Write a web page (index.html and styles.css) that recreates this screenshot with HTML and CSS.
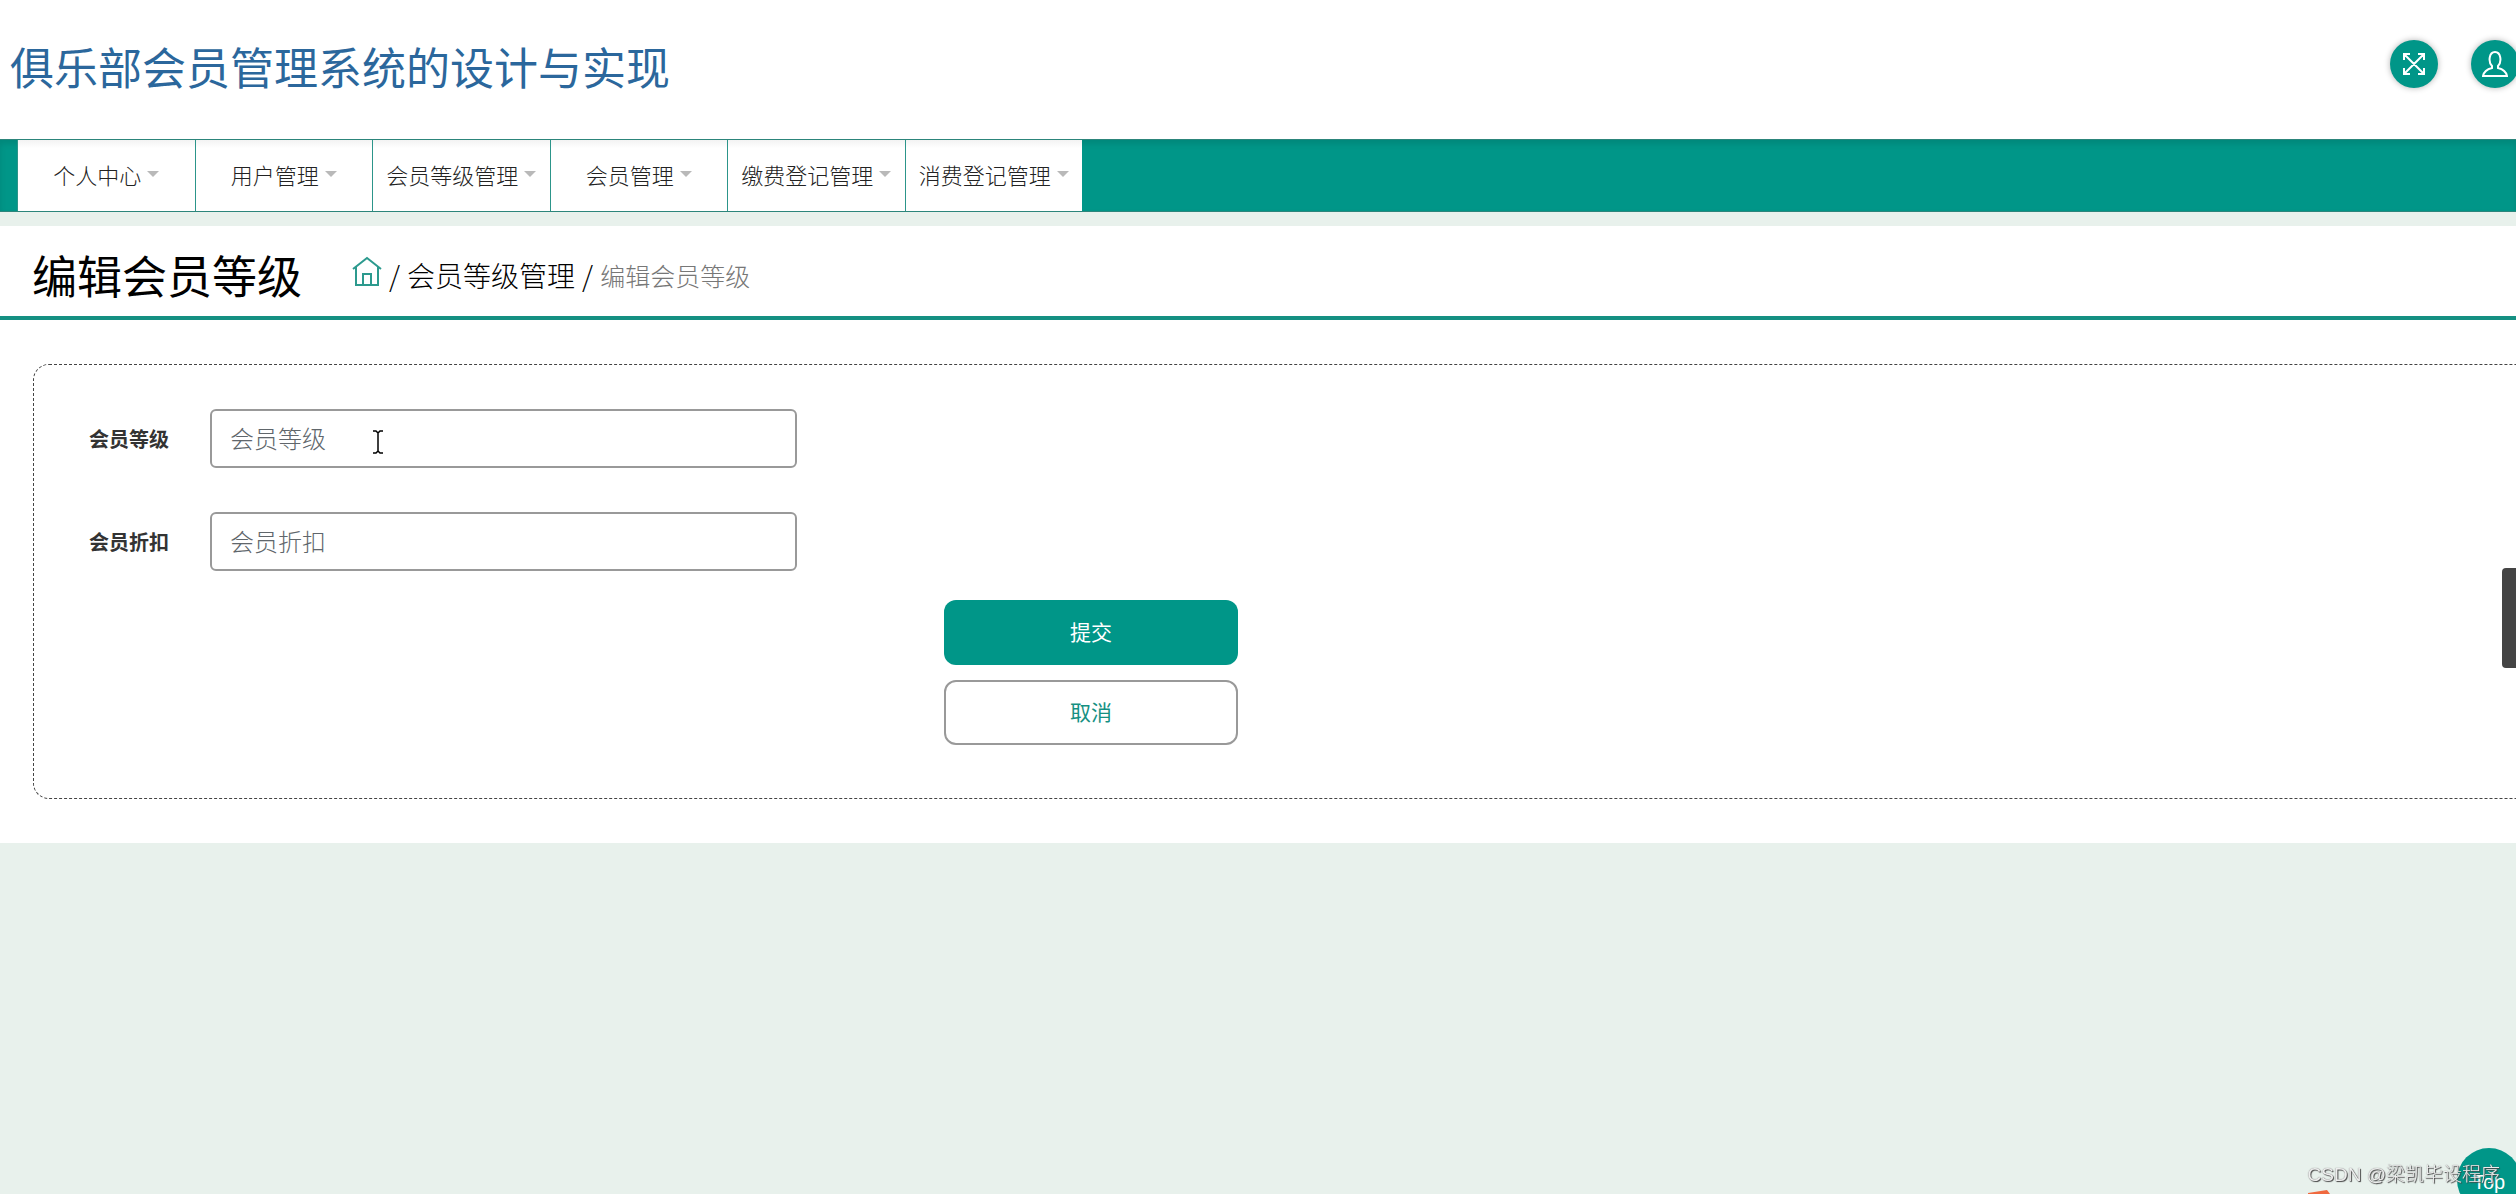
FILE: index.html
```html
<!DOCTYPE html>
<html lang="zh-CN">
<head>
    <meta charset="UTF-8">
    <meta name="viewport" content="width=device-width, initial-scale=1.0">
    <title>编辑会员等级</title>
    <link rel="stylesheet" href="styles.css">
</head>
<body>
    <header class="header">
        <div class="logo">俱乐部会员管理系统的设计与实现</div>
        <div class="header-actions">
            <button type="button" class="circle-btn" aria-label="全屏">
                <svg width="24" height="24" viewBox="0 0 24 24" fill="none" stroke="currentColor" stroke-width="2">
                    <path d="M2 2l20 20M22 2L2 22M2 8V2h6M16 2h6v6M22 16v6h-6M8 22H2v-6"/>
                </svg>
            </button>
            <button type="button" class="circle-btn" aria-label="个人中心">
                <svg width="26" height="26" viewBox="0 0 26 26" fill="none" stroke="currentColor" stroke-width="2">
                    <path d="M10 17v-2C6 11 7 1 13 1s7 10 3 14v2c4 1 8 3 9 8H1c1-5 5-7 9-8z"/>
                </svg>
            </button>
        </div>
    </header>

    <nav class="navbar">
        <div class="nav-list">
            <button type="button" class="nav-item">个人中心<span class="caret"></span></button>
            <button type="button" class="nav-item">用户管理<span class="caret"></span></button>
            <button type="button" class="nav-item">会员等级管理<span class="caret"></span></button>
            <button type="button" class="nav-item">会员管理<span class="caret"></span></button>
            <button type="button" class="nav-item">缴费登记管理<span class="caret"></span></button>
            <button type="button" class="nav-item">消费登记管理<span class="caret"></span></button>
        </div>
    </nav>

    <main class="content">
        <div class="page-head">
            <h1 class="page-title">编辑会员等级</h1>
            <div class="breadcrumb">
                <a href="#" class="home" aria-label="首页">
                    <svg width="30" height="32" viewBox="0 0 30 32" fill="none" stroke="currentColor" stroke-width="2">
                        <path d="M1 13L15 2l14 11M4 11v18h22V11M11 29V18h8v11"/>
                    </svg>
                </a>
                <span>/</span>
                <span>会员等级管理</span>
                <span>/</span>
                <span class="current">编辑会员等级</span>
            </div>
        </div>

        <form class="edit-form">
            <div class="form-row">
                <label for="level">会员等级</label>
                <input type="text" id="level" placeholder="会员等级">
            </div>
            <div class="form-row">
                <label for="discount">会员折扣</label>
                <input type="text" id="discount" placeholder="会员折扣">
            </div>
            <div class="form-btns">
                <button type="button" class="btn btn-submit">提交</button>
                <button type="button" class="btn btn-cancel">取消</button>
            </div>
        </form>
    </main>

    <!-- 悬浮元素 -->
    <svg class="cursor" width="12" height="24" viewBox="0 0 12 24" fill="none" stroke="#000" stroke-width="1.5">
        <path d="M1 1h3l2 2 2-2h3M6 3v18M1 23h3l2-2 2 2h3"/>
    </svg>
    <div class="side-tab"></div>
    <button type="button" class="top-btn">Top</button>
    <svg class="corner-mark" width="22" height="4" viewBox="0 0 22 4">
        <path d="M0 3L19 0l3 4H0z" fill="#f0693f"/>
    </svg>
    <div class="watermark">CSDN @梁凯毕设程序</div>
</body>
</html>
```
FILE: styles.css
```css
* {
    box-sizing: border-box;
}

body {
    margin: 0;
    min-height: 100vh;
    overflow: hidden;
    background-color: #e8f1ec;
    font-family: "Noto Sans CJK SC", sans-serif;
    color: #333;
}

button,
input {
    font-family: inherit;
}

button {
    cursor: pointer;
}

/* 头部 */
.header {
    display: flex;
    justify-content: space-between;
    align-items: center;
    height: 139px;
    padding: 0 0 11px 10px;
    background-color: #fff;
}

.logo {
    padding-top: 4px;
    font-size: 44px;
    line-height: 64px;
    color: #2b679c;
}

.header-actions {
    display: flex;
    gap: 33px;
    margin-right: -3px;
}

.circle-btn {
    display: flex;
    align-items: center;
    justify-content: center;
    width: 48px;
    height: 48px;
    padding: 0;
    border: none;
    border-radius: 50%;
    background-color: #009688;
    color: #fff;
    box-shadow: 0 0 6px rgba(0, 0, 0, 0.3);
}

/* 导航 */
.navbar {
    height: 73px;
    padding-left: 17px;
    background-color: #009688;
    border-top: 1px solid #2c857b;
    border-bottom: 1px solid #2c857b;
    box-shadow: inset 0 4px 6px rgba(0, 0, 0, 0.1);
}

.nav-list {
    display: flex;
    width: 1065px;
    height: 100%;
}

.nav-item {
    display: flex;
    flex: 1;
    align-items: center;
    justify-content: center;
    gap: 6px;
    padding: 0 0 4px;
    border: none;
    border-left: 1px solid #2c958a;
    background: linear-gradient(#f3f3f3, #fff 8px);
    font-size: 22px;
    font-weight: 300;
    color: #222;
}

.caret {
    border: 6px solid transparent;
    border-top-color: #b9b9b9;
    border-bottom: none;
}

/* 内容 */
.content {
    margin-top: 14px;
    padding-bottom: 44px;
    background-color: #fff;
}

.page-head {
    display: flex;
    align-items: center;
    gap: 50px;
    height: 94px;
    padding-left: 32px;
    padding-top: 8px;
    border-bottom: 4px solid #159082;
}

.page-title {
    margin: 0;
    font-size: 45px;
    line-height: 64px;
    font-weight: 400;
    color: #000;
}

.breadcrumb {
    display: flex;
    align-items: center;
    gap: 7px;
    font-size: 28px;
    line-height: 40px;
    font-weight: 300;
    color: #000;
}

.home {
    display: flex;
    padding-bottom: 6px;
    color: #2c9a8e;
}

.current {
    font-size: 25px;
    color: #777;
}

/* 表单 */
.edit-form {
    margin: 44px 0 0 33px;
    padding: 44px 0 53px 55px;
    border: 1px dashed #444;
    border-right: none;
    border-radius: 16px 0 0 16px;
}

.form-row {
    display: flex;
    align-items: center;
    margin-bottom: 44px;
}

.form-row label {
    width: 121px;
    font-size: 20px;
    line-height: 30px;
    font-weight: 700;
}

.form-row input {
    width: 587px;
    height: 59px;
    padding: 0 18px 2px;
    border: 2px solid #999;
    border-radius: 6px;
    background-color: #fff;
    font-size: 24px;
    font-weight: 300;
}

.form-row input::placeholder {
    color: #60666b;
}

.form-btns {
    display: flex;
    flex-direction: column;
    gap: 15px;
    margin-top: -15px;
    padding-left: 855px;
}

.btn {
    width: 294px;
    height: 65px;
    padding: 0 0 4px;
    border-radius: 12px;
    font-size: 21px;
}

.btn-submit {
    border: none;
    background-color: #009688;
    color: #fff;
}

.btn-cancel {
    border: 2px solid #999;
    background-color: #fff;
    color: #159082;
}

/* 悬浮 */
.cursor {
    position: absolute;
    left: 372px;
    top: 430px;
    pointer-events: none;
}

.side-tab {
    position: fixed;
    right: 0;
    top: 568px;
    width: 14px;
    height: 100px;
    border-radius: 4px 0 0 4px;
    background-color: #444;
}

.top-btn {
    position: fixed;
    right: -5px;
    bottom: -18px;
    width: 64px;
    height: 64px;
    padding: 4px 0 0;
    border: none;
    border-radius: 50%;
    background-color: #009688;
    color: #fff;
    font-family: "Liberation Sans", sans-serif;
    font-size: 20px;
}

.corner-mark {
    position: fixed;
    right: 186px;
    bottom: 0;
}

.watermark {
    position: fixed;
    right: 16px;
    bottom: 4px;
    font-family: "Liberation Sans", "Noto Sans CJK SC", sans-serif;
    font-size: 19px;
    line-height: 30px;
    font-weight: 300;
    color: #eee;
    text-shadow: 1px 1px 1px #444, 0 0 1px #666;
}
```
